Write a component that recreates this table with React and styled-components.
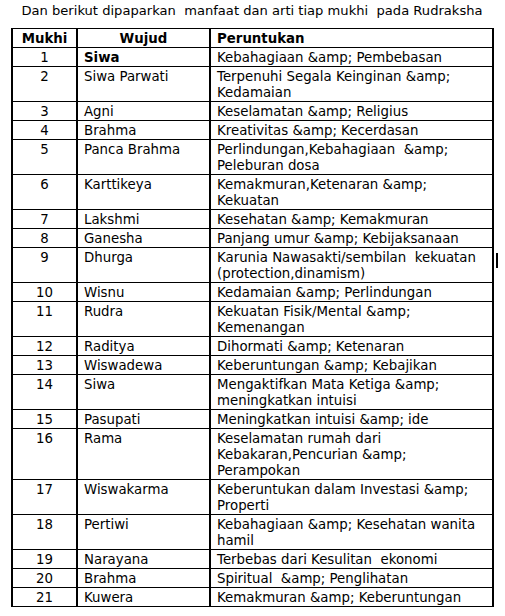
import React from "react";
import styled, { createGlobalStyle } from "styled-components";

const GlobalStyle = createGlobalStyle`
  body {
    margin: 0;
    background: #ffffff;
  }
`;

const Page = styled.div`
  width: 505px;
  height: 616px;
  padding: 3px 0 0 11px;
  box-sizing: border-box;
  font-family: Verdana, "DejaVu Sans", sans-serif;
  font-size: 13.33px;
  color: #000;
`;

const Title = styled.div`
  width: 482px;
  text-align: center;
  font-size: 13.1px;
  line-height: 16px;
  white-space: pre;
  margin-bottom: 9px;
`;

const Table = styled.table`
  border-collapse: collapse;
  width: 481px;
  table-layout: fixed;
`;

const Row = styled.tr``;

const Cell = styled.td`
  border-top: 1px solid #000;
  border-bottom: 1px solid #000;
  border-left: 2px solid #000;
  border-right: 2px solid #000;
  padding: 2px 6px 0 6px;
  line-height: 16px;
  vertical-align: top;
  white-space: pre;
  text-align: ${p => (p.$center ? "center" : "left")};
  font-weight: ${p => (p.$bold ? "bold" : "normal")};
  position: relative;
`;

const HeadCell = styled(Cell).attrs({ as: "th" })``;

const Marker = styled.span`
  position: absolute;
  right: -6px;
  top: 5px;
  width: 2px;
  height: 15px;
  background: #000;
`;

const rows = [
  ["1", "Siwa", ["Kebahagiaan &amp; Pembebasan"], true],
  ["2", "Siwa Parwati", ["Terpenuhi Segala Keinginan &amp;", "Kedamaian"]],
  ["3", "Agni", ["Keselamatan &amp; Religius"]],
  ["4", "Brahma", ["Kreativitas &amp; Kecerdasan"]],
  ["5", "Panca Brahma", ["Perlindungan,Kebahagiaan  &amp;", "Peleburan dosa"]],
  ["6", "Karttikeya", ["Kemakmuran,Ketenaran &amp;", "Kekuatan"]],
  ["7", "Lakshmi", ["Kesehatan &amp; Kemakmuran"]],
  ["8", "Ganesha", ["Panjang umur &amp; Kebijaksanaan"]],
  ["9", "Dhurga", ["Karunia Nawasakti/sembilan  kekuatan", "(protection,dinamism)"], false, true],
  ["10", "Wisnu", ["Kedamaian &amp; Perlindungan"]],
  ["11", "Rudra", ["Kekuatan Fisik/Mental &amp;", "Kemenangan"]],
  ["12", "Raditya", ["Dihormati &amp; Ketenaran"]],
  ["13", "Wiswadewa", ["Keberuntungan &amp; Kebajikan"]],
  ["14", "Siwa", ["Mengaktifkan Mata Ketiga &amp;", "meningkatkan intuisi"]],
  ["15", "Pasupati", ["Meningkatkan intuisi &amp; ide"]],
  ["16", "Rama", ["Keselamatan rumah dari", "Kebakaran,Pencurian &amp;", "Perampokan"]],
  ["17", "Wiswakarma", ["Keberuntukan dalam Investasi &amp;", "Properti"]],
  ["18", "Pertiwi", ["Kebahagiaan &amp; Kesehatan wanita", "hamil"]],
  ["19", "Narayana", ["Terbebas dari Kesulitan  ekonomi"]],
  ["20", "Brahma", ["Spiritual  &amp; Penglihatan"]],
  ["21", "Kuwera", ["Kemakmuran &amp; Keberuntungan"]],
];

export default function App() {
  return (
    <Page>
      <GlobalStyle />
      <Title>Dan berikut dipaparkan  manfaat dan arti tiap mukhi  pada Rudraksha</Title>
      <Table>
        <colgroup>
          <col style={{ width: 65 }} />
          <col style={{ width: 133 }} />
          <col style={{ width: 283 }} />
        </colgroup>
        <thead>
          <Row>
            <HeadCell $center $bold>Mukhi</HeadCell>
            <HeadCell $center $bold>Wujud</HeadCell>
            <HeadCell $bold>Peruntukan</HeadCell>
          </Row>
        </thead>
        <tbody>
          {rows.map(([num, name, lines, bold, mark]) => (
            <Row key={num}>
              <Cell $center>{num}</Cell>
              <Cell $bold={bold}>{name}</Cell>
              <Cell>
                {lines.join("\n")}
                {mark && <Marker />}
              </Cell>
            </Row>
          ))}
        </tbody>
      </Table>
    </Page>
  );
}
